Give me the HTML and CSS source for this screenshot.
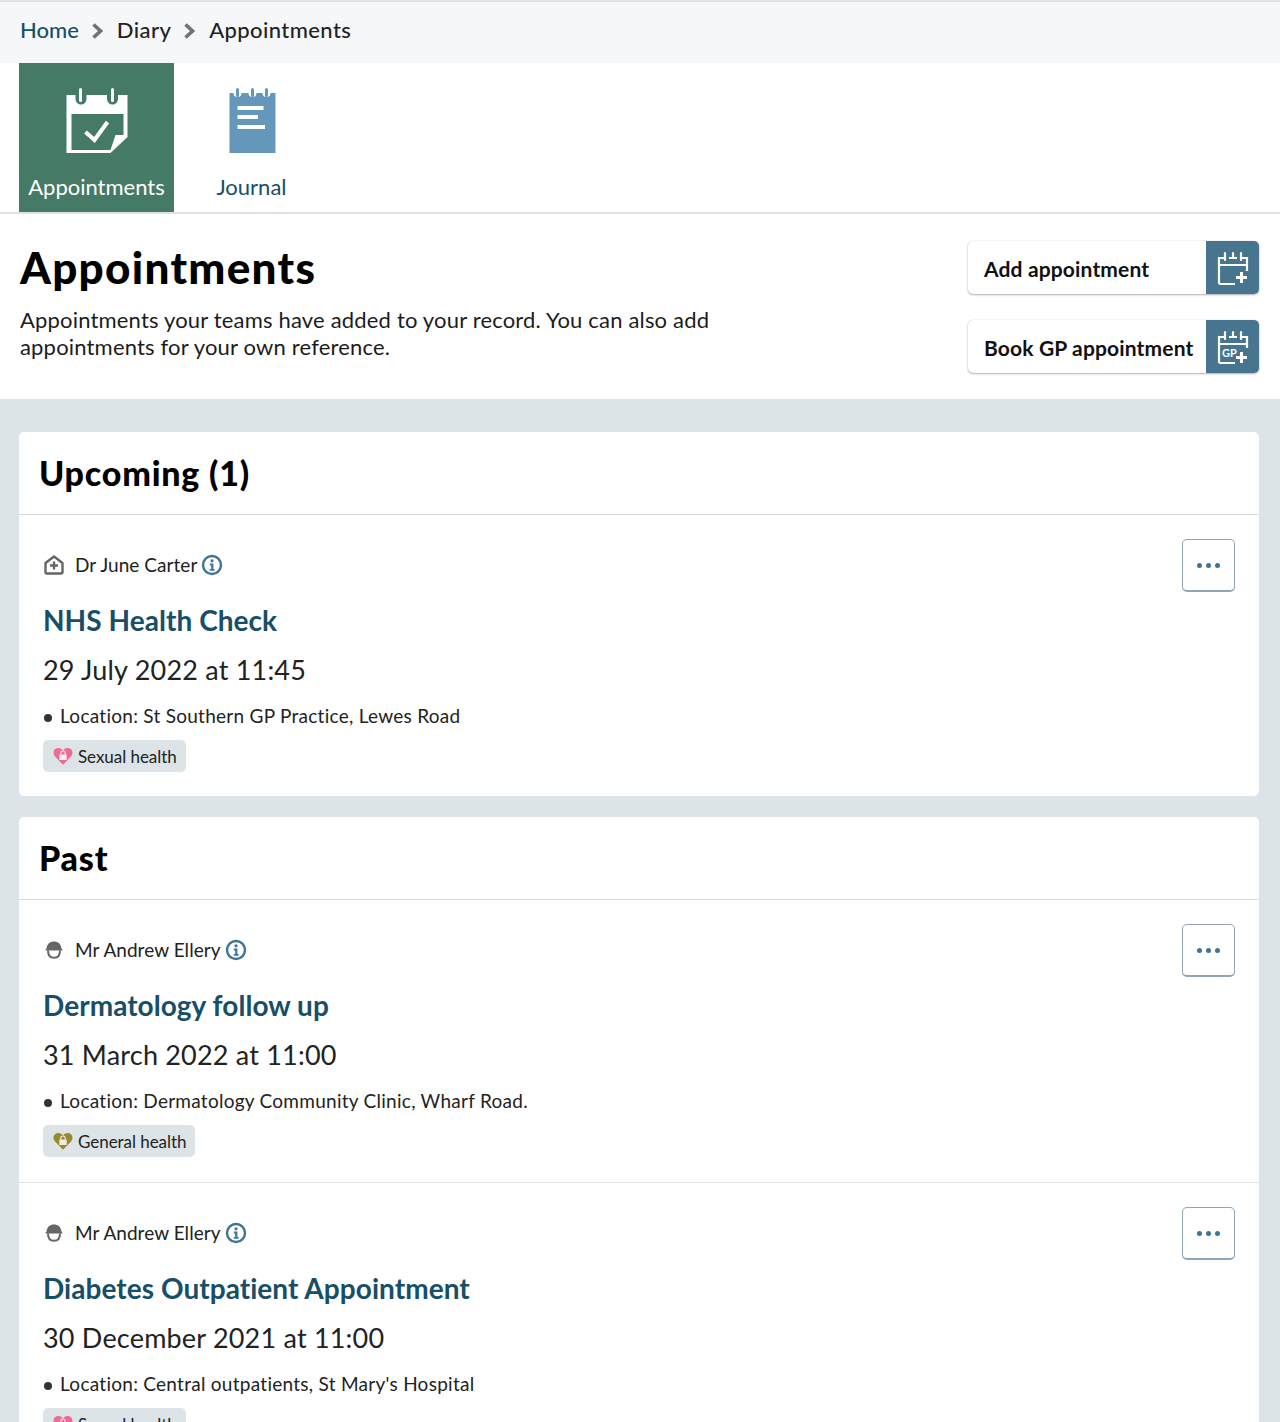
FILE: index.html
```html
<!doctype html>
<html lang="en">
<head>
  <meta charset="utf-8">
  <title>Appointments</title>
  <link rel="stylesheet" href="styles.css">
</head>
<body>

<svg class="defs" width="0" height="0">
  <symbol id="i-info" viewBox="0 0 22 22">
    <circle cx="11" cy="11" r="9" fill="none" stroke="#3f7496" stroke-width="2.400"/>
    <circle cx="11" cy="6.800" r="1.600" fill="#3f7496"/>
    <path d="M8.800 9.600H12.400V15H13.600V16.800H8.800V15H10.200V11.400H8.800Z" fill="#3f7496"/>
  </symbol>
  <symbol id="i-home" viewBox="0 0 20 20">
    <path d="M1.500 8 10 1.500 18.500 8V17a1.500 1.500 0 0 1-1.500 1.500H3A1.500 1.500 0 0 1 1.500 17Z" fill="none" stroke="#666" stroke-width="2.400" stroke-linejoin="round"/>
    <path d="M8.800 6.500h2.400v2.800H14v2.400h-2.800v2.800H8.800v-2.800H6V9.300h2.800Z" fill="#666"/>
  </symbol>
  <symbol id="i-person" viewBox="0 0 18 18">
    <path d="M.5 9.500C.5 8.500 1 8 1.500 7.500 2 3 5 .5 9 .5s7 2.500 7.500 7c.5.5 1 1 1 2Z" fill="#666"/>
    <path d="M3 9.500c0 4.800 2.500 7.300 6 7.300s6-2.500 6-7.300" fill="none" stroke="#666" stroke-width="2"/>
  </symbol>
  <symbol id="i-heart" viewBox="0 0 20 18">
    <path d="M10 17.800 1.800 9.200C-.8 6.300.8 1 5.200 1 7.400 1 9 2 10 3.700 11 2 12.600 1 14.800 1c4.400 0 6 5.300 3.400 8.200Z"/>
    <path d="M6.300 7.500h7.400v5.500H6.300Z" fill="#fff" opacity=".85"/>
    <path d="M7.800 7.500V6.200a2.200 2.200 0 0 1 4.400 0v1.300" fill="none" stroke="#fff" stroke-width="1.200" opacity=".85"/>
  </symbol>
</svg>

<nav class="crumbs">
  <a class="crumb-link" href="#">Home</a>
  <svg class="chev" viewBox="0 0 12 16"><path d="M2.500 1.500 9.500 8l-7 6.500" fill="none" stroke="#737373" stroke-width="3.600"/></svg>
  <span>Diary</span>
  <svg class="chev" viewBox="0 0 12 16"><path d="M2.500 1.500 9.500 8l-7 6.500" fill="none" stroke="#737373" stroke-width="3.600"/></svg>
  <span>Appointments</span>
</nav>

<div class="tabs">
  <a class="tab tab-active" href="#">
    <svg class="tab-icon" width="64" height="68" viewBox="0 0 64 68">
      <path d="M1.500 9H10.500V13A5.500 5.500 0 0 0 21.500 13V9H42V13A5.500 5.500 0 0 0 53 13V9H62.500V51L45.500 67H1.500Z" fill="#fff"/>
      <rect x="14" y="2" width="3" height="14" rx="1.500" fill="#fff"/>
      <rect x="46" y="2" width="3" height="14" rx="1.500" fill="#fff"/>
      <path d="M6.500 28H58.500V49H50.500L45.500 64H6.500Z" fill="#457a66"/>
      <path d="M20.500 46l9 8 13-18" fill="none" stroke="#fff" stroke-width="4"/>
    </svg>
    <span>Appointments</span>
  </a>
  <a class="tab tab-plain" href="#">
    <svg class="tab-icon" width="48" height="68" viewBox="0 0 48 68">
      <path d="M1.500 7H5.500A4 4 0 0 0 13.500 7H20.500A4 4 0 0 0 28.500 7H34.500A4 4 0 0 0 42.500 7H47.500V67H1.500Z" fill="#6497b9"/>
      <g fill="#6497b9"><rect x="8" y="2" width="3" height="9" rx="1.500"/><rect x="23" y="2" width="3" height="9" rx="1.500"/><rect x="37" y="2" width="3" height="9" rx="1.500"/></g>
      <path d="M9.500 20H35.500V24H9.500ZM9.500 29H30V33H9.500ZM9.500 39H37V43H9.500Z" fill="#fff"/>
    </svg>
    <span>Journal</span>
  </a>
</div>

<header class="page-head">
  <div class="intro">
    <h1>Appointments</h1>
    <p>Appointments your teams have added to your record. You can also add appointments for your own reference.</p>
  </div>
  <div class="actions">
    <a class="action" href="#">
      <span class="action-label">Add appointment</span>
      <span class="action-icon">
        <svg width="32" height="36" viewBox="0 0 32 36">
          <path d="M2 34V8H7M12 8H20M25 8H30V21M2 15H30M2 34H18" fill="none" stroke="#fff" stroke-width="2.200"/>
          <path d="M8 3V10M24 3V10M16 3V8" stroke="#fff" stroke-width="2.200" stroke-linecap="round"/>
          <path d="M23 22h3v4h4v3h-4v4h-3v-4h-4v-3h4Z" fill="#fff"/>
        </svg>
      </span>
    </a>
    <a class="action" href="#">
      <span class="action-label">Book GP appointment</span>
      <span class="action-icon">
        <svg width="32" height="36" viewBox="0 0 32 36">
          <path d="M2 34V8H7M12 8H20M25 8H30V19M2 15H30M2 34H18" fill="none" stroke="#fff" stroke-width="2.200"/>
          <path d="M8 3V10M24 3V10M16 3V8" stroke="#fff" stroke-width="2.200" stroke-linecap="round"/>
          <text x="5" y="28" class="gp">GP</text>
          <path d="M23 23h3v4h4v3h-4v4h-3v-4h-4v-3h4Z" fill="#fff"/>
        </svg>
      </span>
    </a>
  </div>
</header>

<main class="content">
  <section class="card">
    <h2 class="card-title">Upcoming (1)</h2>
    <article class="appt">
      <div class="who">
        <svg class="who-icon" width="20" height="20"><use href="#i-home"/></svg>
        <span>Dr June Carter</span>
        <svg class="info" width="22" height="22"><use href="#i-info"/></svg>
      </div>
      <a class="appt-title" href="#">NHS Health Check</a>
      <div class="appt-date">29 July 2022 at 11:45</div>
      <ul class="appt-meta"><li>Location: St Southern GP Practice, Lewes Road</li></ul>
      <span class="tag"><svg class="heart-pink" width="20" height="18"><use href="#i-heart"/></svg>Sexual health</span>
      <button class="more"><i></i><i></i><i></i></button>
    </article>
  </section>

  <section class="card">
    <h2 class="card-title">Past</h2>
    <article class="appt">
      <div class="who">
        <svg class="who-icon" width="18" height="18"><use href="#i-person"/></svg>
        <span>Mr Andrew Ellery</span>
        <svg class="info" width="22" height="22"><use href="#i-info"/></svg>
      </div>
      <a class="appt-title" href="#">Dermatology follow up</a>
      <div class="appt-date">31 March 2022 at 11:00</div>
      <ul class="appt-meta"><li>Location: Dermatology Community Clinic, Wharf Road.</li></ul>
      <span class="tag"><svg class="heart-gold" width="20" height="18"><use href="#i-heart"/></svg>General health</span>
      <button class="more"><i></i><i></i><i></i></button>
    </article>
    <article class="appt">
      <div class="who">
        <svg class="who-icon" width="18" height="18"><use href="#i-person"/></svg>
        <span>Mr Andrew Ellery</span>
        <svg class="info" width="22" height="22"><use href="#i-info"/></svg>
      </div>
      <a class="appt-title" href="#">Diabetes Outpatient Appointment</a>
      <div class="appt-date">30 December 2021 at 11:00</div>
      <ul class="appt-meta"><li>Location: Central outpatients, St Mary's Hospital</li></ul>
      <span class="tag"><svg class="heart-pink" width="20" height="18"><use href="#i-heart"/></svg>Sexual health</span>
      <button class="more"><i></i><i></i><i></i></button>
    </article>
  </section>
</main>

</body>
</html>
```

FILE: styles.css
```css
html, body { margin: 0; padding: 0; height: 1422px; overflow: hidden; }
body { font-family: "Lato", "Noto Sans", sans-serif; color: #1c1c1c; background: #dde4e7; }
a { text-decoration: none; color: inherit; }
.defs { display: block; height: 0; }

.crumbs {
  display: flex; align-items: center; height: 55px; padding: 0 0 6px 20px;
  background: #f6f7f9; border-top: 2px solid #dfe3e8;
  font-size: 22px; font-weight: 500; letter-spacing: .4px; color: #222;
}
.crumb-link { color: #174f68; letter-spacing: 0; }
.chev { width: 12px; height: 16px; margin: 2px 14px 0 12px; }

.tabs { display: flex; height: 149px; padding-left: 19px; background: #fff; border-bottom: 2px solid #dfe3e8; }
.tab { display: flex; flex-direction: column; align-items: center; width: 155px; font-size: 22px; }
.tab-icon { margin-top: 23px; height: 68px; }
.tab span { margin-top: 19px; }
.tab-active { background: #457a66; color: #fff; }
.tab-plain { color: #174f68; }

.page-head { display: flex; justify-content: space-between; height: 185px; background: #fff; padding: 0 21px 0 20px; }
.intro { width: 720px; }
h1 { margin: 27px 0 0; font-size: 44px; line-height: 52px; font-weight: 900; letter-spacing: 1.300px; color: #000; }
.intro p { margin: 13px 0 0; font-size: 22px; line-height: 27px; letter-spacing: .18px; }
.actions { display: flex; flex-direction: column; gap: 26px; padding-top: 27px; }
.action {
  display: flex; width: 291px; height: 53px; background: #fff; border-radius: 5px;
  box-shadow: 0 1px 2px rgba(0,0,0,.3), 0 0 1px rgba(0,0,0,.25); overflow: hidden;
}
.action-label { flex: 1; padding-left: 16px; font-size: 21px; line-height: 55px; font-weight: 700; letter-spacing: .15px; white-space: nowrap; color: #111; }
.action-icon { display: flex; align-items: center; justify-content: center; width: 53px; background: #477590; }
.gp { font: 700 11px "Lato", sans-serif; fill: #fff; }

.content { padding: 33px 21px 0 19px; display: flex; flex-direction: column; gap: 21px; }
.card { background: #fff; border-radius: 5px; }
.card-title {
  margin: 0; height: 83px; padding: 20px 20px 0; box-sizing: border-box; font-size: 34px; line-height: 42px;
  font-weight: 900; color: #000; letter-spacing: .8px; border-bottom: 1px solid #d5dadd;
}
.appt { position: relative; height: 283px; padding: 24px 24px 0; box-sizing: border-box; border-bottom: 1px solid #dfe3e6; }
.card:first-child .appt { height: 281px; border-bottom: 0; }
.who { display: flex; align-items: center; height: 52px; font-size: 19px; letter-spacing: .05px; color: #222; }
.who span { padding-bottom: 2px; }
.who-icon { width: 22px; margin-right: 10px; }
.info { margin-left: 4px; }
.appt-title { display: block; margin-top: 11px; font-size: 28px; line-height: 36px; font-weight: 700; color: #174f68; letter-spacing: .05px; }
.appt-date { margin-top: 14px; font-size: 27px; line-height: 36px; letter-spacing: .2px; color: #222; }
.appt-meta { margin: 14px 0 0; padding: 0; list-style: none; font-size: 19px; line-height: 28px; letter-spacing: .27px; color: #222; }
.appt-meta li::before {
  content: ""; display: inline-block; width: 8px; height: 8px; margin: 0 8px 1px 1px;
  border-radius: 50%; background: #333;
}
.tag {
  display: inline-flex; align-items: center; gap: 5px; height: 32px; margin-top: 10px; padding: 0 9px 0 10px;
  background: #dde4e7; border-radius: 5px; font-size: 17px; letter-spacing: -.05px; color: #222;
}
.heart-pink { fill: #ee6a92; }
.heart-gold { fill: #97892c; }

.more {
  position: absolute; top: 24px; right: 24px; width: 53px; height: 53px; display: flex;
  align-items: center; justify-content: center; gap: 4px; padding: 0; background: #fff;
  border: 1px solid #8ea6b5; border-bottom-width: 2px; border-radius: 5px;
}
.more i { width: 5px; height: 5px; border-radius: 50%; background: #3f7496; }
```
